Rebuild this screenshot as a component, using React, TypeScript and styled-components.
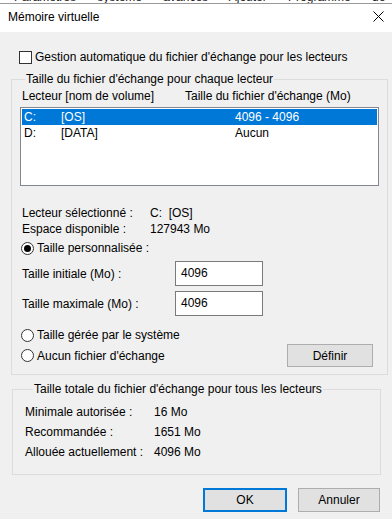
import React from "react";
import styled, { createGlobalStyle } from "styled-components";

const Global = createGlobalStyle`
  html, body { margin: 0; padding: 0; background: #f0f0f0; }
  body { font-family: "Liberation Sans", Arial, sans-serif; font-size: 12px; color: #000; }
  * { box-sizing: border-box; }
`;

const Window = styled.div`
  width: 392px;
  height: 519px;
  display: flex;
  flex-direction: column;
  background: #f0f0f0;
  overflow: hidden;
`;

const BehindStrip = styled.div`
  height: 4px;
  background: #fff;
  border-bottom: 1px solid #9a9a9a;
  overflow: hidden;
  white-space: nowrap;
  font-size: 12px;
  line-height: 12px;
  color: #222;
  padding-left: 14px;
  word-spacing: 18px;
`;

const BehindText = styled.div`
  margin-top: -9px;
`;

const TitleBar = styled.div`
  height: 28px;
  background: #fff;
  display: flex;
  align-items: flex-start;
  justify-content: space-between;
  padding: 5px 8px 0 8px;
`;

const Title = styled.span`
  line-height: 16px;
  font-size: 12px;
`;

const CloseIcon = styled.svg`
  margin-top: 2px;
  width: 11px;
  height: 11px;
`;

const Body = styled.div`
  flex: 1;
  display: flex;
  flex-direction: column;
  padding: 17px 4px 0 11px;
`;

const CheckRow = styled.label`
  display: flex;
  align-items: center;
  gap: 3px;
  height: 16px;
  margin-left: 8px;
  line-height: 16px;
`;

const CheckBox = styled.span`
  width: 13px;
  height: 13px;
  border: 1px solid #333;
  background: #fff;
  display: inline-block;
`;

const Group = styled.fieldset<{ $ml: number; $mr: number; $mt: number; $pad: string }>`
  margin: ${(p) => p.$mt}px ${(p) => p.$mr}px 0 ${(p) => p.$ml}px;
  padding: ${(p) => p.$pad};
  border: 1px solid #dcdcdc;
  min-width: 0;
  display: flex;
  flex-direction: column;
`;

const Legend = styled.legend<{ $ml: number }>`
  margin-left: ${(p) => p.$ml}px;
  padding: 0 1px;
  line-height: 16px;
  font-size: 12px;
`;

const HeaderRow = styled.div`
  display: grid;
  grid-template-columns: 163px 1fr;
  padding-left: 2px;
  line-height: 16px;
  margin-top: 1px;
`;

const ListBox = styled.div`
  margin-top: 3px;
  height: 79px;
  border: 1px solid #828790;
  background: #fff;
  padding: 1px;
`;

const ListRow = styled.div<{ $selected?: boolean }>`
  display: grid;
  grid-template-columns: 37px 174px 1fr;
  height: 16px;
  line-height: 16px;
  padding-left: 2px;
  background: ${(p) => (p.$selected ? "#0078d7" : "transparent")};
  color: ${(p) => (p.$selected ? "#fff" : "#000")};
`;

const InfoGrid = styled.div<{ $col: number; $gap: number; $mt: number; $ml: number }>`
  display: grid;
  grid-template-columns: ${(p) => p.$col}px 1fr;
  row-gap: ${(p) => p.$gap}px;
  margin-top: ${(p) => p.$mt}px;
  margin-left: ${(p) => p.$ml}px;
  line-height: 16px;
`;

const RadioRow = styled.label<{ $mt: number }>`
  display: flex;
  align-items: center;
  gap: 3px;
  height: 16px;
  line-height: 16px;
  margin-left: 1px;
  margin-top: ${(p) => p.$mt}px;
`;

const RadioCircle = styled.span<{ $checked?: boolean }>`
  width: 13px;
  height: 13px;
  border-radius: 50%;
  border: 1px solid #333;
  background: #fff;
  display: inline-flex;
  align-items: center;
  justify-content: center;
  &::after {
    content: "";
    width: 7px;
    height: 7px;
    border-radius: 50%;
    background: #000;
    display: ${(p) => (p.$checked ? "block" : "none")};
  }
`;

const FieldRow = styled.div<{ $mt: number }>`
  display: grid;
  grid-template-columns: 153px 88px;
  align-items: center;
  margin-top: ${(p) => p.$mt}px;
  padding-left: 2px;
`;

const TextInput = styled.div`
  height: 25px;
  border: 1px solid #7a7a7a;
  background: #fff;
  padding: 3px 0 0 5px;
  line-height: 16px;
`;

const BottomRow = styled.div`
  display: flex;
  align-items: center;
  justify-content: space-between;
  margin-top: 1px;
  padding-right: 6px;
`;

const Button = styled.div<{ $default?: boolean; $w: number; $h: number }>`
  width: ${(p) => p.$w}px;
  height: ${(p) => p.$h}px;
  background: #e1e1e1;
  border: ${(p) => (p.$default ? "2px solid #0078d7" : "1px solid #adadad")};
  display: flex;
  align-items: center;
  justify-content: center;
  line-height: 16px;
`;

const ButtonBar = styled.div`
  display: flex;
  justify-content: flex-end;
  gap: 11px;
  margin-top: 13px;
  padding-right: 8px;
`;

export default function App() {
  return (
    <>
      <Global />
      <Window>
        <BehindStrip>
          <BehindText>Paramètres système avancés Ajouter Programme de performances des données</BehindText>
        </BehindStrip>
        <TitleBar>
          <Title>Mémoire virtuelle</Title>
          <CloseIcon viewBox="0 0 11 11">
            <path d="M0.5 0.5 L10.5 10.5 M10.5 0.5 L0.5 10.5" stroke="#000" strokeWidth="1" fill="none" />
          </CloseIcon>
        </TitleBar>
        <Body>
          <CheckRow>
            <CheckBox />
            <span>Gestion automatique du fichier d'échange pour les lecteurs</span>
          </CheckRow>
          <Group $ml={0} $mr={0} $mt={6} $pad="0 8px 7px 8px">
            <Legend $ml={5}>Taille du fichier d'échange pour chaque lecteur</Legend>
            <HeaderRow>
              <span>Lecteur [nom de volume]</span>
              <span>Taille du fichier d'échange (Mo)</span>
            </HeaderRow>
            <ListBox>
              <ListRow $selected>
                <span>C:</span>
                <span>[OS]</span>
                <span>4096 - 4096</span>
              </ListRow>
              <ListRow>
                <span>D:</span>
                <span>[DATA]</span>
                <span>Aucun</span>
              </ListRow>
            </ListBox>
            <InfoGrid $col={128} $gap={0} $mt={19} $ml={2}>
              <span>Lecteur sélectionné :</span>
              <span>C:&nbsp;&nbsp;[OS]</span>
              <span>Espace disponible :</span>
              <span>127943 Mo</span>
            </InfoGrid>
            <RadioRow $mt={3}>
              <RadioCircle $checked />
              <span>Taille personnalisée :</span>
            </RadioRow>
            <FieldRow $mt={5}>
              <span>Taille initiale (Mo) :</span>
              <TextInput>4096</TextInput>
            </FieldRow>
            <FieldRow $mt={5}>
              <span>Taille maximale (Mo) :</span>
              <TextInput>4096</TextInput>
            </FieldRow>
            <RadioRow $mt={11}>
              <RadioCircle />
              <span>Taille gérée par le système</span>
            </RadioRow>
            <BottomRow>
              <RadioRow $mt={0}>
                <RadioCircle />
                <span>Aucun fichier d'échange</span>
              </RadioRow>
              <Button $w={86} $h={23}>Définir</Button>
            </BottomRow>
          </Group>
          <Group $ml={1} $mr={7} $mt={6} $pad="7px 12px 14px 12px">
            <Legend $ml={8}>Taille totale du fichier d'échange pour tous les lecteurs</Legend>
            <InfoGrid $col={129} $gap={4} $mt={0} $ml={0}>
              <span>Minimale autorisée :</span>
              <span>16 Mo</span>
              <span>Recommandée :</span>
              <span>1651 Mo</span>
              <span>Allouée actuellement :</span>
              <span>4096 Mo</span>
            </InfoGrid>
          </Group>
          <ButtonBar>
            <Button $default $w={84} $h={24}>OK</Button>
            <Button $w={82} $h={24}>Annuler</Button>
          </ButtonBar>
        </Body>
      </Window>
    </>
  );
}
